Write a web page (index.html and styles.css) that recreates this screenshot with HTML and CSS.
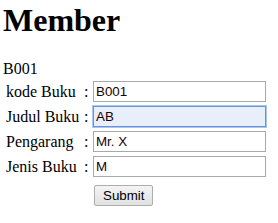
FILE: index.html
```html
<!DOCTYPE html>
<html>
<head>
<meta charset="utf-8">
<title>Member</title>
<link rel="stylesheet" href="styles.css">
</head>
<body>
<h1 class="title">Member</h1>
<div class="code">B001</div>
<form class="form">
  <label class="lbl" for="kode">kode Buku</label><span class="colon">:</span><input class="field" id="kode" type="text" value="B001">
  <label class="lbl" for="judul">Judul Buku</label><span class="colon">:</span><input class="field focused" id="judul" type="text" value="AB">
  <label class="lbl" for="peng">Pengarang</label><span class="colon">:</span><input class="field" id="peng" type="text" value="Mr. X">
  <label class="lbl" for="jenis">Jenis Buku</label><span class="colon">:</span><input class="field" id="jenis" type="text" value="M">
  <span class="spacer"></span><span class="spacer"></span><div class="btn-cell"><button class="btn" type="submit">Submit</button></div>
</form>
</body>
</html>
```
FILE: styles.css
```css
html, body {
  background: #ffffff;
}
body {
  margin: 0 0 0 3px;
  font-family: "Liberation Serif", "Times New Roman", serif;
  font-size: 16px;
  color: #000000;
}
.title {
  margin: 2px 0 0;
  font-size: 32px;
  line-height: 37px;
  font-weight: bold;
}
.code {
  margin-top: 21px;
  line-height: 18px;
}
.form {
  margin: 3px 0 0 3px;
  display: grid;
  grid-template-columns: 78px 9px 173px;
  grid-template-rows: 21px 21px 21px 21px auto;
  row-gap: 4px;
  align-items: center;
}
.lbl {
  line-height: 18px;
  white-space: nowrap;
}
.colon {
  line-height: 18px;
}
.field {
  box-sizing: border-box;
  width: 173px;
  height: 21px;
  margin: 0;
  padding: 1px 2px;
  border: 1px solid #a9a9a9;
  background: #ffffff;
  font-family: "Liberation Sans", Arial, sans-serif;
  font-size: 13.33px;
  color: #1a0000;
  outline: none;
}
.field.focused {
  background: #e8effb;
  border-color: #6b93d6;
  box-shadow: 0 0 0 1px #a9c6f2;
}
.btn-cell {
  padding-top: 4px;
  padding-left: 1px;
  align-self: start;
}
.btn {
  display: block;
  box-sizing: border-box;
  height: 21px;
  margin: 0;
  padding: 1px 8px;
  border: 1px solid #adadad;
  border-radius: 2px;
  background: linear-gradient(#f4f4f4, #e1e1e1);
  font-family: "Liberation Sans", Arial, sans-serif;
  font-size: 13.33px;
  color: #000000;
}
```
